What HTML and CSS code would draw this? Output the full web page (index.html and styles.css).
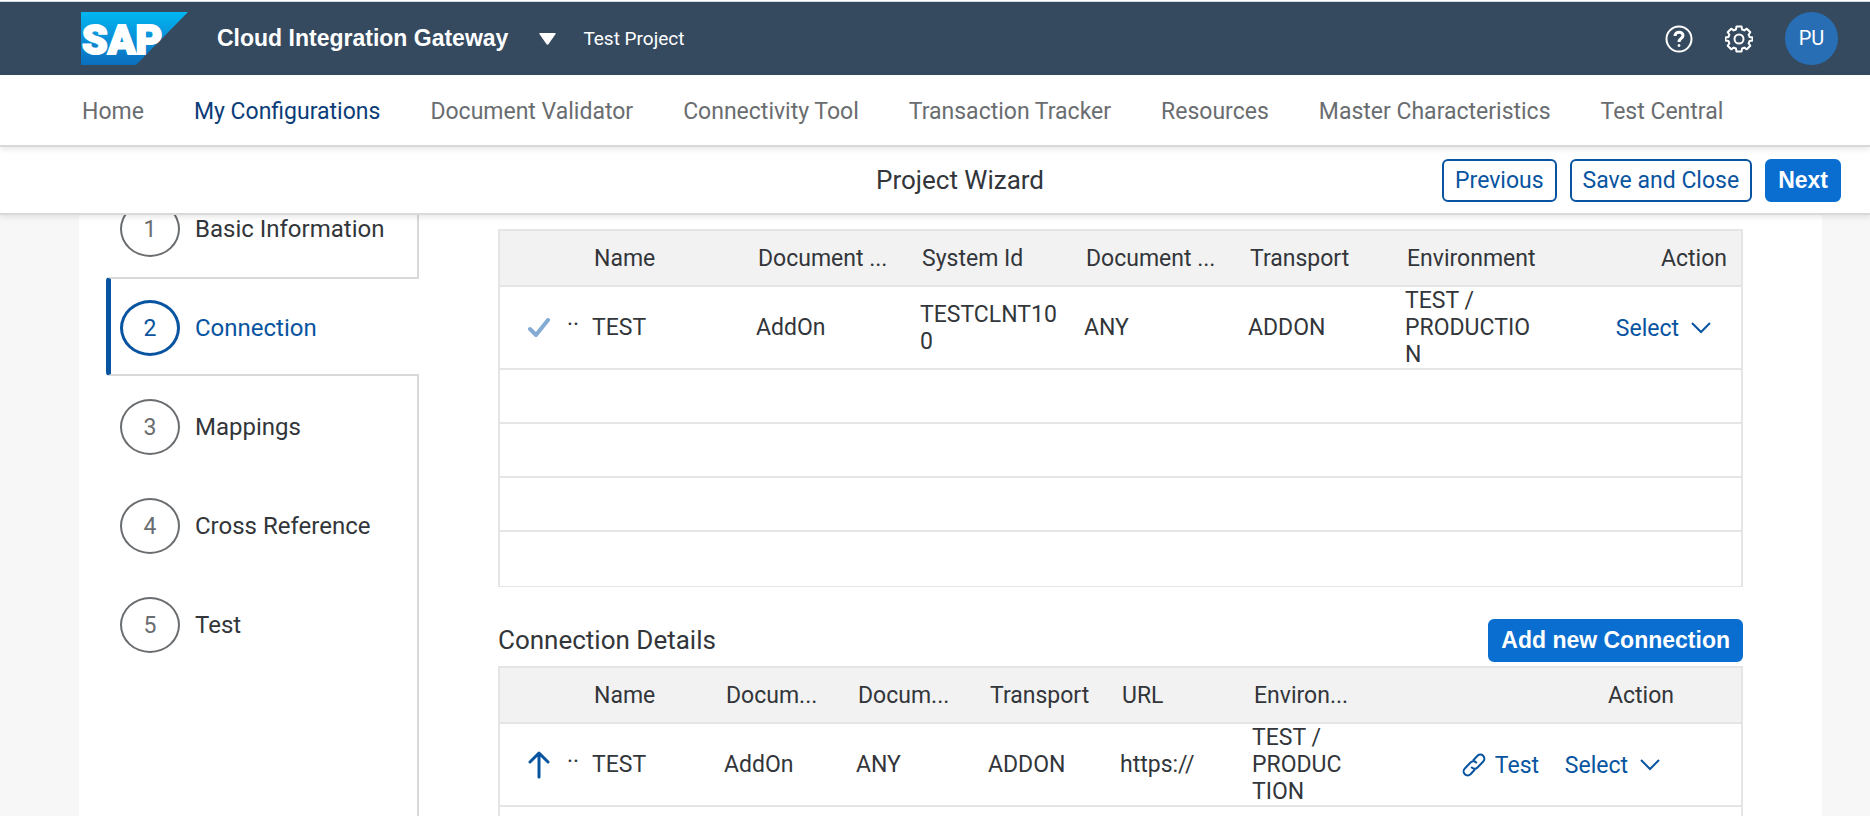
FILE: index.html
```html
<!DOCTYPE html>
<html lang="en">
<head>
  <meta charset="UTF-8">
  <meta name="viewport" content="width=device-width, initial-scale=1.0">
  <title>Cloud Integration Gateway</title>
  <link rel="stylesheet" href="styles.css">
</head>
<body>
  <header class="shellbar">
    <svg class="logo" viewBox="0 0 107 53" role="img" aria-label="SAP">
      <defs>
        <linearGradient id="sapblue" x1="0" y1="0" x2="0" y2="1">
          <stop offset="0" stop-color="#00b8f1"/>
          <stop offset="0.5" stop-color="#0a8fd8"/>
          <stop offset="1" stop-color="#0a6ebe"/>
        </linearGradient>
      </defs>
      <path d="M0 0h107L55 53H0z" fill="url(#sapblue)"/>
      <text class="logo-text" x="1" y="42">SAP</text>
    </svg>
    <h1 class="product">Cloud Integration Gateway</h1>
    <button class="menu-arrow" aria-label="Open menu">
      <svg width="17" height="12" viewBox="0 0 17 12"><path d="M1 0h15q1 0 .6 1L9.6 11q-1.100 1.300-2.200 0L.4 1Q0 0 1 0z" fill="#fff"/></svg>
    </button>
    <span class="project">Test Project</span>
    <div class="shell-actions">
      <button class="shell-btn" aria-label="Help">
        <svg width="28" height="28" viewBox="0 0 28 28" fill="none" stroke="#fff" stroke-width="2">
          <circle cx="14" cy="14" r="12.500"/>
          <path d="M10 11c0-5 8-5 8-.4 0 2.800-4 3-4 6.400" stroke-width="3"/>
          <circle cx="14" cy="20.500" r="1" fill="#fff" stroke-width="1"/>
        </svg>
      </button>
      <button class="shell-btn" aria-label="Settings">
        <svg width="28" height="28" viewBox="0 0 28 28" fill="none" stroke="#fff" stroke-width="2" stroke-linejoin="round">
          <circle cx="14" cy="14" r="4.500"/>
          <path d="M11.500 1.500h5l.6 3 2.200.9 2.500-1.700 3.500 3.500-1.700 2.500.9 2.200 3 .6v3l-3 .6-.9 2.200 1.700 2.500-3.500 3.500-2.500-1.700-2.200.9-.6 3h-5l-.6-3-2.200-.9-2.500 1.700-3.500-3.500 1.700-2.500-.9-2.200-3-.6v-3l3-.6.9-2.200-1.700-2.500 3.500-3.500 2.500 1.700 2.200-.9z"/>
        </svg>
      </button>
      <button class="avatar">PU</button>
    </div>
  </header>

  <nav class="tabs">
    <a href="#">Home</a>
    <a href="#" class="current">My Configurations</a>
    <a href="#">Document Validator</a>
    <a href="#">Connectivity Tool</a>
    <a href="#">Transaction Tracker</a>
    <a href="#">Resources</a>
    <a href="#">Master Characteristics</a>
    <a href="#">Test Central</a>
  </nav>

  <div class="titlebar">
    <h2 class="title">Project Wizard</h2>
    <div class="title-actions">
      <button class="btn">Previous</button>
      <button class="btn">Save and Close</button>
      <button class="btn primary">Next</button>
    </div>
  </div>

  <main class="page">
    <div class="content">
      <ol class="steps">
        <li class="step"><span class="num">1</span>Basic Information</li>
        <li class="step active"><span class="num">2</span>Connection</li>
        <li class="step"><span class="num">3</span>Mappings</li>
        <li class="step"><span class="num">4</span>Cross Reference</li>
        <li class="step"><span class="num">5</span>Test</li>
      </ol>

      <div class="panel">
        <table class="grid systems">
          <colgroup>
            <col class="c-icon"><col class="c-dots"><col class="c-wide"><col class="c-wide"><col class="c-wide"><col class="c-wide"><col class="c-mid"><col class="c-mid"><col>
          </colgroup>
          <thead>
            <tr>
              <th></th><th></th><th>Name</th><th>Document ...</th><th>System Id</th><th>Document ...</th><th>Transport</th><th>Environment</th><th class="end">Action</th>
            </tr>
          </thead>
          <tbody>
            <tr class="data">
              <td class="icon">
                <svg width="22" height="20" viewBox="0 0 22 20" fill="none" stroke="#84abd4" stroke-width="4" stroke-linecap="round" stroke-linejoin="round"><path d="M2 11l6 6L20 2"/></svg>
              </td>
              <td class="dots">..</td>
              <td>TEST</td>
              <td>AddOn</td>
              <td>TESTCLNT100</td>
              <td>ANY</td>
              <td>ADDON</td>
              <td>TEST / PRODUCTION</td>
              <td class="end">
                <button class="link">Select <svg width="20" height="12" viewBox="0 0 20 12" fill="none" stroke="#0854a0" stroke-width="2"><path d="M1 1l9 9 9-9"/></svg></button>
              </td>
            </tr>
            <tr><td colspan="9"></td></tr>
            <tr><td colspan="9"></td></tr>
            <tr><td colspan="9"></td></tr>
            <tr><td colspan="9"></td></tr>
          </tbody>
        </table>

        <div class="section-head">
          <h3 class="title">Connection Details</h3>
          <button class="btn primary">Add new Connection</button>
        </div>

        <table class="grid connections">
          <colgroup>
            <col class="c-icon"><col class="c-dots"><col class="c-small"><col class="c-small"><col class="c-small"><col class="c-small"><col class="c-small"><col class="c-small"><col><col class="c-tail">
          </colgroup>
          <thead>
            <tr>
              <th></th><th></th><th>Name</th><th>Docum...</th><th>Docum...</th><th>Transport</th><th>URL</th><th>Environ...</th><th class="end">Action</th><th></th>
            </tr>
          </thead>
          <tbody>
            <tr class="data">
              <td class="icon">
                <svg width="22" height="28" viewBox="0 0 22 28" fill="none" stroke="#0854a0" stroke-width="3" stroke-linecap="round" stroke-linejoin="round"><path d="M11 26V2M2 11l9-9 9 9"/></svg>
              </td>
              <td class="dots">..</td>
              <td>TEST</td>
              <td>AddOn</td>
              <td>ANY</td>
              <td>ADDON</td>
              <td>https://</td>
              <td>TEST / PRODUCTION</td>
              <td class="end">
                <button class="link test"><svg width="24" height="24" viewBox="0 0 24 24" fill="none" stroke="#0854a0" stroke-width="2" stroke-linecap="round" stroke-linejoin="round"><path d="M11.500 7l4-4.200a4 4 0 0 1 5.700 5.700l-5.700 6a4 4 0 0 1-5.700 0M12.500 17l-4 4.200a4 4 0 0 1-5.700-5.700l5.700-6a4 4 0 0 1 5.700 0"/></svg> Test</button>
                <button class="link">Select <svg width="20" height="12" viewBox="0 0 20 12" fill="none" stroke="#0854a0" stroke-width="2"><path d="M1 1l9 9 9-9"/></svg></button>
              </td>
              <td></td>
            </tr>
            <tr><td colspan="10"></td></tr>
          </tbody>
        </table>
      </div>
    </div>
  </main>
</body>
</html>
```
FILE: styles.css
```css
* {
  box-sizing: border-box;
}
body {
  margin: 0;
  height: 100vh;
  padding: 1px 0 9px;
  display: flex;
  flex-direction: column;
  overflow: hidden;
  background: #fff;
  color: #32363a;
  font-family: Roboto, "Liberation Sans", sans-serif;
  font-size: 23px;
  line-height: 27px;
}
h1, h2, h3, ol {
  margin: 0;
  padding: 0;
}
button {
  font: inherit;
  cursor: pointer;
}

/* shell bar */
.shellbar {
  flex: none;
  display: flex;
  align-items: center;
  height: 74px;
  padding: 0 32px 0 81px;
  border-top: 1px solid #d5dadd;
  background: #354a5f;
  color: #fff;
}
.logo {
  width: 107px;
  height: 53px;
  margin-right: 29px;
}
.logo-text {
  font: 900 41px Roboto, sans-serif;
  fill: #fff;
  stroke: #fff;
  stroke-width: 2px;
}
.product {
  font-family: "Liberation Sans", sans-serif;
  font-size: 23px;
  font-weight: bold;
}
.menu-arrow {
  display: flex;
  margin: 0 27px 0 31px;
  padding: 0;
  border: 0;
  background: none;
}
.project {
  font-size: 19px;
}
.shell-actions {
  display: flex;
  align-items: center;
  margin-left: auto;
  gap: 32px;
}
.shell-btn {
  display: flex;
  padding: 0;
  border: 0;
  background: none;
}
.avatar {
  width: 53px;
  height: 53px;
  padding: 0;
  border: 0;
  border-radius: 50%;
  background: #286eb4;
  color: #fff;
  font-size: 20px;
}

/* navigation */
.tabs {
  flex: none;
  display: flex;
  align-items: center;
  gap: 50px;
  height: 72px;
  padding: 2px 82px 0;
  border-bottom: 2px solid #d9d9d9;
  box-shadow: 0 2px 6px rgba(0, 0, 0, 0.1);
  z-index: 2;
}
.tabs a {
  color: #6a6d70;
  text-decoration: none;
  white-space: nowrap;
}
.tabs .current {
  color: #0a3d78;
}

.titlebar {
  flex: none;
  display: grid;
  grid-template-columns: 1fr auto 1fr;
  align-items: center;
  height: 68px;
  padding: 0 29px 0 79px;
  border-bottom: 2px solid #d9d9d9;
  background: #fff;
  box-shadow: 0 2px 6px rgba(0, 0, 0, 0.1);
  z-index: 1;
}
.title {
  grid-column: 2;
  font-size: 26px;
  font-weight: normal;
}
.title-actions {
  display: flex;
  justify-content: flex-end;
  gap: 13px;
}
.btn {
  height: 43px;
  padding: 0 11px;
  border: 2px solid #0854a0;
  border-radius: 6px;
  background: #fff;
  color: #0854a0;
  white-space: nowrap;
}
.btn.primary {
  border-color: #0a6ed1;
  background: #0a6ed1;
  color: #fff;
  font-family: "Liberation Sans", sans-serif;
  font-weight: bold;
}

/* wizard page */
.page {
  flex: 1;
  min-height: 0;
  display: flex;
  padding: 0 48px 0 79px;
  overflow: hidden;
  background: #f7f7f7;
}
.content {
  flex: 1;
  display: flex;
  gap: 79px;
  padding: 0 79px 0 27px;
  background: #fff;
}
.steps {
  flex: none;
  width: 313px;
  margin-top: -37px;
  list-style: none;
  background: linear-gradient(#d9d9d9, #d9d9d9) right / 2px 100% no-repeat;
}
.step {
  display: flex;
  align-items: center;
  gap: 15px;
  height: 99px;
  padding: 3px 0 0 14px;
  font-size: 24px;
}
.step.active {
  padding-left: 9px;
  border: solid #d9d9d9;
  border-width: 2px 0;
  border-left: 5px solid #0854a0;
  border-radius: 4px 0 0 4px;
  background: #fff;
  color: #0854a0;
}
.num {
  display: flex;
  align-items: center;
  justify-content: center;
  width: 60px;
  height: 56px;
  border: 2px solid #6a6d70;
  border-radius: 50%;
  color: #6a6d70;
  font-size: 23px;
}
.active .num {
  border: 3px solid #0854a0;
  color: #0854a0;
}

.panel {
  flex: 1;
  min-width: 0;
  padding-top: 14px;
}
.grid {
  width: 100%;
  table-layout: fixed;
  border-collapse: separate;
  border-spacing: 0;
  border: 2px solid #e5e5e5;
  border-bottom-width: 1px;
}
.grid th, .grid td {
  padding: 0 8px;
  border-bottom: 2px solid #e5e5e5;
  text-align: left;
  font-weight: normal;
}
.grid th {
  height: 56px;
  background: #f2f2f2;
  white-space: nowrap;
}
.grid td {
  height: 54px;
  padding: 0 16px 0 6px;
  word-break: break-word;
}
.connections td {
  padding-right: 26px;
}
.grid .data td {
  height: 83px;
}
.grid tr:last-child td {
  border-bottom: 0;
}
.grid .icon {
  padding: 0 0 0 28px;
}
.icon svg {
  display: block;
}
.grid .dots {
  padding: 0 0 20px 1px;
}
.grid .end {
  text-align: right;
  padding-right: 14px;
}
.connections th.end {
  padding-right: 8px;
}
.grid td.end {
  padding: 0 30px 0 0;
  white-space: nowrap;
}
.connections td.end {
  padding-right: 22px;
}
.c-icon { width: 66px; }
.c-dots { width: 20px; }
.c-wide { width: 164px; }
.c-mid { width: 157px; }
.c-small { width: 132px; }
.c-tail { width: 59px; }

.link {
  display: inline-flex;
  align-items: center;
  gap: 12px;
  padding: 0;
  border: 0;
  background: none;
  color: #0854a0;
  vertical-align: middle;
}
.link.test {
  gap: 9px;
  margin-right: 20px;
}

.section-head {
  display: flex;
  align-items: center;
  justify-content: space-between;
  padding: 32px 0 4px;
}
```
